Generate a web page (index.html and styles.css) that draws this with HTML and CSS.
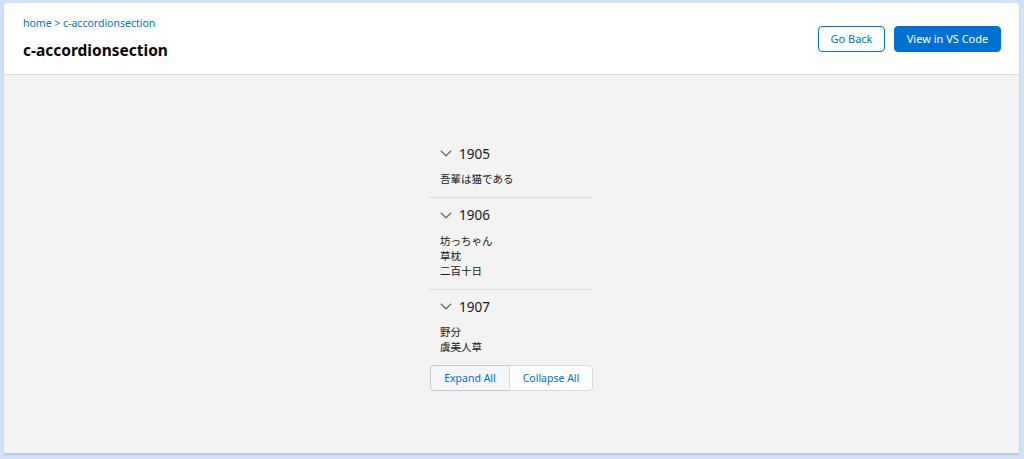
FILE: index.html
```html
<!DOCTYPE html>
<html lang="en">
<head>
    <meta charset="UTF-8">
    <meta name="viewport" content="width=device-width, initial-scale=1.0">
    <title>c-accordionsection</title>
    <link rel="stylesheet" href="styles.css">
</head>
<body>
    <div class="card">
        <div class="page-header">
            <div class="titles">
                <div class="breadcrumb"><a href="#">home</a> &gt; <a href="#">c-accordionsection</a></div>
                <h1 class="page-title">c-accordionsection</h1>
            </div>
            <div class="actions">
                <button class="btn btn-neutral">Go Back</button>
                <button class="btn btn-brand">View in VS Code</button>
            </div>
        </div>
        <div class="page-body">
            <div class="accordion">
                <div class="section">
                    <div class="section-title">
                        <svg class="chevron" viewBox="0 0 12 7"><path d="M0.8 0.8 L6 5.8 L11.2 0.8" /></svg>
                        <span>1905</span>
                    </div>
                    <div class="section-content">
                        <div>吾輩は猫である</div>
                    </div>
                </div>
                <div class="section">
                    <div class="section-title">
                        <svg class="chevron" viewBox="0 0 12 7"><path d="M0.8 0.8 L6 5.8 L11.2 0.8" /></svg>
                        <span>1906</span>
                    </div>
                    <div class="section-content">
                        <div>坊っちゃん</div>
                        <div>草枕</div>
                        <div>二百十日</div>
                    </div>
                </div>
                <div class="section last">
                    <div class="section-title">
                        <svg class="chevron" viewBox="0 0 12 7"><path d="M0.8 0.8 L6 5.8 L11.2 0.8" /></svg>
                        <span>1907</span>
                    </div>
                    <div class="section-content">
                        <div>野分</div>
                        <div>虞美人草</div>
                    </div>
                </div>
                <div class="btn-group">
                    <button class="btn-group-item active">Expand All</button>
                    <button class="btn-group-item">Collapse All</button>
                </div>
            </div>
        </div>
    </div>
</body>
</html>
```

FILE: styles.css
```css
html, body {
    height: 100%;
}

body {
    margin: 0;
    padding: 3px 5px 6px 4px;
    box-sizing: border-box;
    background-color: #d0e2f8;
    font-family: "Noto Sans", "Noto Sans CJK JP", sans-serif;
    color: #181818;
}

.card {
    height: 100%;
    display: flex;
    flex-direction: column;
    background-color: #f3f3f3;
    border-radius: 4px 4px 0 0;
    box-shadow: 0 2px 2px rgba(0, 0, 0, 0.12);
    overflow: hidden;
}

.page-header {
    display: flex;
    justify-content: space-between;
    align-items: center;
    height: 71px;
    padding: 0 18px 0 19px;
    background-color: #fff;
    border-bottom: 1px solid #dddbda;
}

.breadcrumb {
    font-size: 10.5px;
    color: #0070d2;
    margin-top: -1px;
}

.breadcrumb a {
    color: #0070d2;
    text-decoration: none;
}

.page-title {
    margin: 9px 0 0;
    font-size: 15.5px;
    font-weight: bold;
    color: #080707;
}

.actions {
    display: flex;
    gap: 9px;
}

.btn {
    height: 26px;
    padding: 0;
    border-radius: 4px;
    font-family: inherit;
    font-size: 11px;
    white-space: nowrap;
    cursor: pointer;
}

.btn-neutral {
    width: 67px;
    background-color: #fff;
    border: 1px solid #0070d2;
    color: #0070d2;
}

.btn-brand {
    width: 107px;
    background-color: #0070d2;
    border: 1px solid #0070d2;
    color: #fff;
}

.page-body {
    flex: 1;
    display: flex;
    justify-content: center;
    align-items: center;
}

.accordion {
    width: 163px;
}

.section {
    padding: 6px 0 10px;
    border-bottom: 1px solid #dddbda;
}

.section.last {
    border-bottom: none;
}

.section-title {
    display: flex;
    align-items: center;
    height: 22px;
    padding-left: 10px;
    font-size: 13.5px;
}

.chevron {
    width: 12px;
    height: 7px;
    margin-right: 7px;
    fill: none;
    stroke: #706e6b;
    stroke-width: 1.3;
}

.section-content {
    margin-top: 7.5px;
    padding-left: 10px;
    font-size: 10.5px;
    line-height: 15px;
}

.btn-group {
    display: flex;
}

.btn-group-item {
    height: 26px;
    padding: 0;
    background-color: #fff;
    border: 1px solid #dddbda;
    color: #0070d2;
    font-family: inherit;
    font-size: 10.5px;
    white-space: nowrap;
    cursor: pointer;
}

.btn-group-item:first-child {
    width: 80px;
    border-radius: 4px 0 0 4px;
}

.btn-group-item:last-child {
    width: 84px;
    margin-left: -1px;
    border-radius: 0 4px 4px 0;
}

.btn-group-item.active {
    background-color: #f3f6fa;
    border-color: #c9c9c9;
}
```
